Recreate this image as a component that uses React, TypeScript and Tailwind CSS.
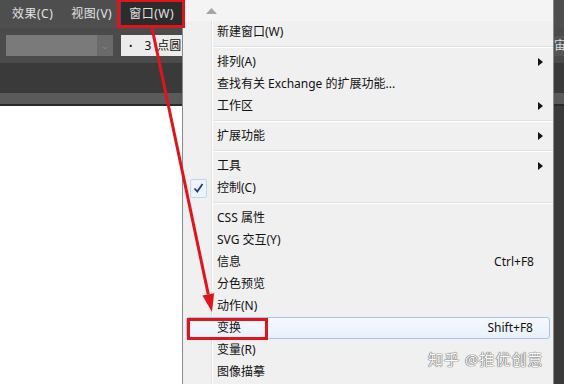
import React from "react";

type Item =
  | { sep: true }
  | {
      sep?: false;
      label: string;
      shortcut?: string;
      sub?: boolean;
      checked?: boolean;
      active?: boolean;
    };

const items: Item[] = [
  { label: "新建窗口(W)" },
  { sep: true },
  { label: "排列(A)", sub: true },
  { label: "查找有关 Exchange 的扩展功能..." },
  { label: "工作区", sub: true },
  { sep: true },
  { label: "扩展功能", sub: true },
  { sep: true },
  { label: "工具", sub: true },
  { label: "控制(C)", checked: true },
  { sep: true },
  { label: "CSS 属性" },
  { label: "SVG 交互(Y)" },
  { label: "信息", shortcut: "Ctrl+F8" },
  { label: "分色预览" },
  { label: "动作(N)" },
  { label: "变换", shortcut: "Shift+F8", active: true },
  { label: "变量(R)" },
  { label: "图像描摹" },
];

const font = "font-['Noto_Sans','Noto_Sans_CJK_SC',sans-serif]";

function MenuRow({ item }: { item: Item }) {
  if (item.sep) {
    return (
      <div className="flex h-[8px]">
        <div className="w-[29px] shrink-0 border-r border-[#e2e3e3]" />
        <div className="flex flex-1 flex-col justify-center border-l border-white">
          <div className="h-px bg-[#e0e0e0]" />
          <div className="h-px bg-white" />
        </div>
      </div>
    );
  }

  if (item.active) {
    return (
      <div className="ml-[3px] mr-[3px] flex h-[22px] items-center rounded-[3px] border border-[#a9c5e6] bg-gradient-to-b from-[#f6f9fd] to-[#e8f0fa]">
        <div className="w-[25px] shrink-0" />
        <div className="flex flex-1 items-center pl-[5px] pr-[16px]">
          <span>{item.label}</span>
          <span className="ml-auto">{item.shortcut}</span>
        </div>
      </div>
    );
  }

  return (
    <div className="flex h-[22px]">
      <div className="flex w-[29px] shrink-0 items-center justify-center border-r border-[#e2e3e3]">
        {item.checked && (
          <div className="ml-[2px] flex h-[19px] w-[17px] items-center justify-center rounded-[2px] border border-[#c2d5ec] bg-[#eef4fc]">
            <svg width="11" height="10" viewBox="0 0 11 10">
              <path d="M1.5 5.5l2.8 3L9.5 1" stroke="#1e3a8c" strokeWidth="1.8" fill="none" />
            </svg>
          </div>
        )}
      </div>
      <div className="relative flex flex-1 items-center border-l border-white pl-[4px] pr-[19px]">
        <span>{item.label}</span>
        {item.shortcut && <span className="ml-auto">{item.shortcut}</span>}
        {item.sub && (
          <svg className="absolute right-[10px] top-[7px]" width="5" height="8" viewBox="0 0 5 8">
            <path d="M0 0l5 4l-5 4z" fill="#111" />
          </svg>
        )}
      </div>
    </div>
  );
}

export default function App() {
  return (
    <div className={`relative h-[384px] w-[564px] overflow-hidden bg-white text-[12px] ${font}`}>
      {/* app chrome behind the menu */}
      <div className="flex h-full flex-col">
        <div className="flex h-[28px] items-center bg-[#4e4e4e] tracking-[0.5px] text-[#e2e2e2]">
          <span className="ml-[12px]">效果(C)</span>
          <span className="ml-[18px]">视图(V)</span>
          <span className="ml-[9px] flex h-[24px] items-center bg-[#2c2c2c] pl-[8px] pr-[10px]">窗口(W)</span>
        </div>
        <div className="flex h-[35px] items-center bg-[#4b4b4b]">
          <div className="ml-[6px] h-[21px] w-[91px] bg-[#7a7a7a]" />
          <div className="flex h-[21px] w-[16px] items-center justify-center bg-[#6a6a6a] text-[9px] text-[#8a8a8a]">⌄</div>
          <div className="ml-[8px] flex h-[21px] w-[62px] items-center bg-[#ececec] text-[#111]">
            <span className="ml-[8px] text-[9px]">•</span>
            <span className="ml-[12px]">3</span>
            <span className="ml-[6px] whitespace-nowrap">点圆</span>
          </div>
          <div className="ml-auto flex h-[20px] w-[10px] items-center overflow-hidden whitespace-nowrap bg-[#555] text-[#ddd]">宙新</div>
        </div>
        <div className="h-[30px] bg-[#3a3a3a]" />
        <div className="h-[13px] border-b-2 border-[#2a2a2a] bg-[#5a5a5a]" />
        <div className="flex flex-1">
          <div className="flex-1 bg-white" />
          <div className="w-[12px] bg-[#3a3a3a]" />
        </div>
      </div>

      {/* window menu */}
      <div className="absolute left-[182px] top-0 flex h-[390px] w-[372px] flex-col border-x border-[#8a8a8a] bg-[#f0f0f0] text-[#111]">
        <div className="flex h-[21px] items-center bg-[#f4f4f4] pl-[23px]">
          <svg width="11" height="6" viewBox="0 0 11 6">
            <path d="M0 6l5.5-6l5.5 6z" fill="#a6a6a6" />
          </svg>
        </div>
        {items.map((item, i) => (
          <MenuRow key={i} item={item} />
        ))}
      </div>

      {/* annotations */}
      <div className="absolute left-[117px] top-[-1px] h-[29px] w-[68px] border-[3px] border-[#e0141b]" />
      <div className="absolute left-[187px] top-[318px] h-[22px] w-[81px] border-[3px] border-[#e0141b]" />
      <svg className="absolute left-0 top-0" width="564" height="384" viewBox="0 0 564 384">
        <line x1="152" y1="28" x2="208.3" y2="294.4" stroke="#e0141b" strokeWidth="3" />
        <path d="M212 312L214.1 293.2L202.4 295.6z" fill="#e0141b" />
      </svg>

      <div className="absolute left-[428px] top-[348px] text-[15px] tracking-[1px] text-[#fafafa] [text-shadow:0_0_1px_#666,0_0_1px_#666,0_0_1px_#666]">
        知乎 @推优创意
      </div>
    </div>
  );
}
